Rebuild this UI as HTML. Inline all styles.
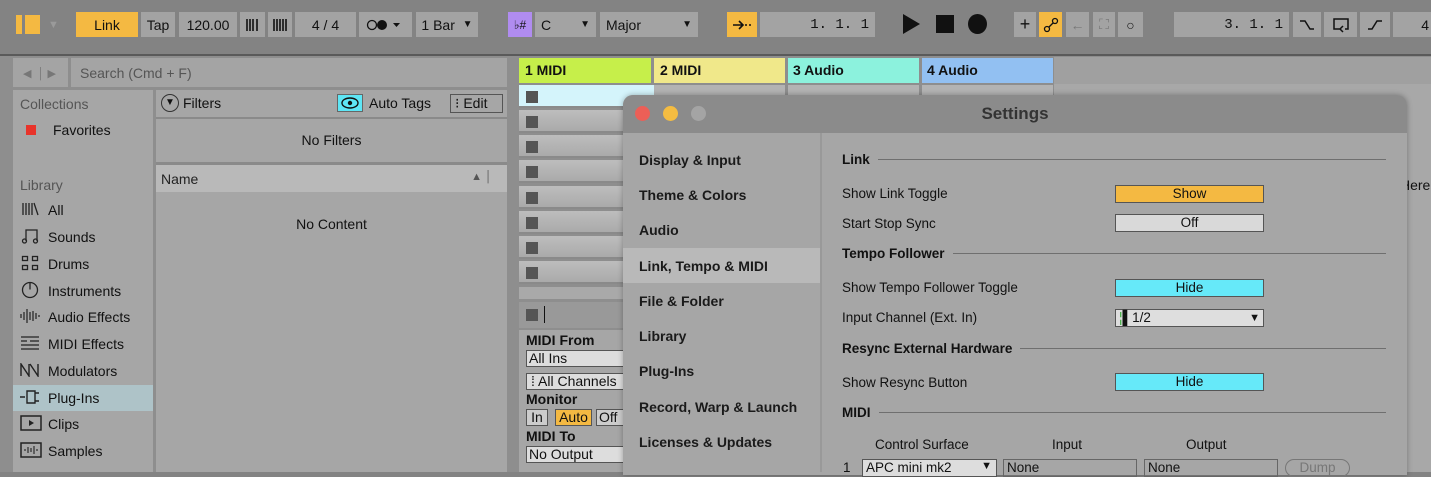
<!DOCTYPE html>
<html><head><style>
*{box-sizing:border-box;margin:0;padding:0}
body{width:1431px;height:472px;overflow:hidden;background:#838383;font-family:"Liberation Sans",sans-serif;font-size:13.5px;color:#111;position:relative}
.a{position:absolute}
.btn{position:absolute;top:12px;height:25px;background:#a3a3a3;display:flex;align-items:center;justify-content:center;font-size:14px;color:#111}
.side div.i{position:absolute;left:0;width:140px;height:26px;display:flex;align-items:center;padding-left:20px;font-size:14px}
.ic{width:20px;display:inline-block;margin-right:8px;text-align:center;font-size:13px}
.slot{position:absolute;left:519px;width:135px;height:23px;background:linear-gradient(#bdbdbd,#aaa);border-bottom:2px solid #8a8a8a}
.slot:before{content:"";position:absolute;left:7px;top:6px;width:12px;height:12px;background:#555}
.nav div{position:absolute;left:623px;width:197px;height:35px;padding-left:16px;display:flex;align-items:center;font-weight:bold;font-size:14px;color:#1a1a1a}
.sec{position:absolute;left:842px;font-weight:bold;font-size:13.5px;display:flex;align-items:center;width:544px}
.sec:after{content:"";flex:1;height:1px;background:#6f6f6f;margin-left:8px}
.lb{position:absolute;left:842px;font-size:13.5px}
.tg{position:absolute;left:1115px;width:149px;height:18px;border:1px solid #555;text-align:center;font-size:13.5px;line-height:16px}
</style></head><body>
<!-- toolbar -->
<div class="a" style="left:16px;top:15px;width:6px;height:19px;background:#f4b942"></div>
<div class="a" style="left:25px;top:15px;width:15px;height:19px;background:#f4b942"></div>
<div class="a" style="left:48px;top:19px;color:#9a9a9a;font-size:11px">▼</div>
<div class="btn" style="left:76px;width:62px;background:#f4b942">Link</div>
<div class="btn" style="left:141px;width:34px">Tap</div>
<div class="btn" style="left:179px;width:58px">120.00</div>
<div class="btn" style="left:240px;width:25px"><svg width="14" height="14"><path d="M1 1v12M4 1v12M7 1v12M11 1v12" stroke="#111" stroke-width="1.6"/></svg></div>
<div class="btn" style="left:268px;width:24px"><svg width="14" height="14"><path d="M1 1v12M4 1v12M7 1v12M10 1v12M13 1v12" stroke="#111" stroke-width="1.6"/></svg></div>
<div class="btn" style="left:295px;width:61px">4 / 4</div>
<div class="btn" style="left:359px;width:53px"><svg width="40" height="14"><circle cx="6" cy="7" r="4.5" fill="none" stroke="#111" stroke-width="1.3"/><circle cx="16" cy="7" r="5" fill="#111"/><path d="M27 5h7l-3.5 4z" fill="#111"/></svg></div>
<div class="btn" style="left:416px;width:62px">1 Bar &nbsp;<span style="font-size:10px">▼</span></div>
<div class="btn" style="left:508px;width:24px;background:#b08cf0;font-size:12px">♭#</div>
<div class="btn" style="left:535px;width:61px;justify-content:space-between;padding:0 6px">C<span style="font-size:10px">▼</span></div>
<div class="btn" style="left:600px;width:98px;justify-content:space-between;padding:0 6px">Major<span style="font-size:10px">▼</span></div>
<div class="btn" style="left:727px;width:30px;background:#f4b942"><svg width="20" height="12"><path d="M1 6h9M7 2l4 4-4 4M13 6h2M17 6h2" stroke="#111" stroke-width="1.6" fill="none"/></svg></div>
<div class="btn" style="left:760px;width:115px;font-family:'Liberation Mono',monospace;justify-content:flex-end;padding-right:6px">1. 1. 1</div>
<div class="a" style="left:903px;top:14px;width:0;height:0;border-left:17px solid #111;border-top:10px solid transparent;border-bottom:10px solid transparent"></div>
<div class="a" style="left:936px;top:15px;width:18px;height:18px;background:#111"></div>
<div class="a" style="left:968px;top:14px;width:19px;height:20px;border-radius:50%;background:#111"></div>
<div class="btn" style="left:1014px;width:22px;font-size:18px">+</div>
<div class="btn" style="left:1039px;width:23px;background:#f4b942"><svg width="16" height="16"><circle cx="4" cy="12" r="2.5" fill="none" stroke="#111" stroke-width="1.3"/><circle cx="12" cy="4" r="2.5" fill="none" stroke="#111" stroke-width="1.3"/><path d="M6 10l4-4" stroke="#111" stroke-width="1.3"/></svg></div>
<div class="btn" style="left:1066px;width:23px;color:#777">←</div>
<div class="btn" style="left:1093px;width:22px;color:#777">⛶</div>
<div class="btn" style="left:1118px;width:25px">○</div>
<div class="btn" style="left:1174px;width:115px;font-family:'Liberation Mono',monospace;justify-content:flex-end;padding-right:6px">3. 1. 1</div>
<div class="btn" style="left:1293px;width:28px"><svg width="16" height="12"><path d="M1 2h5l5 8h4" stroke="#111" stroke-width="1.5" fill="none"/></svg></div>
<div class="btn" style="left:1324px;width:33px"><svg width="18" height="16"><path d="M8 12H2V2h14v10h-3M11 9l-3 3 3 3" stroke="#111" stroke-width="1.5" fill="none"/></svg></div>
<div class="btn" style="left:1360px;width:30px"><svg width="16" height="12"><path d="M1 10h4l5-8h5" stroke="#111" stroke-width="1.5" fill="none"/></svg></div>
<div class="btn" style="left:1393px;width:38px;justify-content:flex-end;padding-right:2px">4</div>
<div class="a" style="left:0;top:54px;width:1431px;height:2px;background:#5a5a5a"></div>
<div class="a" style="left:0;top:56px;width:1431px;height:416px;background:#8e8e8e"></div>
<!-- browser -->
<div class="a" style="left:13px;top:58px;width:55px;height:29px;background:#a4a4a4;color:#777;font-size:11px;padding:9px 0 0 10px">◀ &nbsp;│ ▶</div>
<div class="a" style="left:71px;top:58px;width:436px;height:29px;background:#a4a4a4;color:#555;padding:7px 0 0 9px;font-size:14px">Search (Cmd + F)</div>
<div class="a side" style="left:13px;top:90px;width:140px;height:382px;background:#a6a6a6">
<div class="a" style="left:7px;top:6px;color:#555;font-size:14px">Collections</div>
<div class="i" style="top:27px;padding-left:13px"><span style="width:10px;height:10px;background:#e8332a;display:inline-block;margin-right:17px"></span>Favorites</div>
<div class="a" style="left:7px;top:87px;color:#555;font-size:14px">Library</div>
<div class="i" style="top:107px;padding-left:7px"><span class="ic"><svg width="18" height="14"><path d="M2 1v12M5 1v12M8 1v12M11 1v12M13 1l4 12" stroke="#222" stroke-width="1.3"/></svg></span>All</div>
<div class="i" style="top:134px;padding-left:7px"><span class="ic"><svg width="18" height="16"><path d="M5 13V2h11v11" stroke="#222" stroke-width="1.3" fill="none"/><circle cx="3.5" cy="13" r="2" fill="none" stroke="#222" stroke-width="1.3"/><circle cx="14.5" cy="13" r="2" fill="none" stroke="#222" stroke-width="1.3"/></svg></span>Sounds</div>
<div class="i" style="top:161px;padding-left:7px"><span class="ic"><svg width="18" height="16"><rect x="1.5" y="1.5" width="5" height="4" fill="none" stroke="#222" stroke-width="1.3"/><rect x="11.5" y="1.5" width="5" height="4" fill="none" stroke="#222" stroke-width="1.3"/><rect x="1.5" y="10.5" width="5" height="4" fill="none" stroke="#222" stroke-width="1.3"/><rect x="11.5" y="10.5" width="5" height="4" fill="none" stroke="#222" stroke-width="1.3"/></svg></span>Drums</div>
<div class="i" style="top:188px;padding-left:7px"><span class="ic"><svg width="18" height="18"><circle cx="9" cy="9" r="7.5" fill="none" stroke="#222" stroke-width="1.3"/><path d="M9 1.5v7" stroke="#222" stroke-width="1.3"/></svg></span>Instruments</div>
<div class="i" style="top:214px;padding-left:7px"><span class="ic"><svg width="20" height="16"><path d="M1 6v4M4 4v8M7 1v14M10 4v8M13 3v10M16 5v6M19 7v2" stroke="#222" stroke-width="1.2"/></svg></span>Audio Effects</div>
<div class="i" style="top:241px;padding-left:7px"><span class="ic"><svg width="20" height="14"><path d="M1 1h18M1 5h6M10 5h9M1 9h18M1 13h18" stroke="#222" stroke-width="1.3"/></svg></span>MIDI Effects</div>
<div class="i" style="top:268px;padding-left:7px"><span class="ic"><svg width="20" height="14"><path d="M1 13V1l8 12V1M10 1l8 12V1" stroke="#222" stroke-width="1.4" fill="none"/></svg></span>Modulators</div>
<div class="i" style="top:295px;padding-left:7px;background:#aec3c8"><span class="ic"><svg width="22" height="16"><path d="M0 8h5M7 2h8v12H7zM15 4h4M15 12h4" stroke="#222" stroke-width="1.4" fill="none"/></svg></span>Plug-Ins</div>
<div class="i" style="top:321px;padding-left:7px"><span class="ic"><svg width="22" height="16"><rect x="1" y="1" width="20" height="14" fill="none" stroke="#222" stroke-width="1.5"/><path d="M9 5l5 3-5 3z" fill="#222"/></svg></span>Clips</div>
<div class="i" style="top:348px;padding-left:7px"><span class="ic"><svg width="22" height="16"><rect x="1" y="1" width="20" height="14" fill="none" stroke="#222" stroke-width="1.5"/><path d="M5 7v2M8 5v6M11 6v4M14 4v8M17 7v2" stroke="#222" stroke-width="1.1"/></svg></span>Samples</div>
</div>
<div class="a" style="left:156px;top:90px;width:351px;height:382px;background:#a6a6a6"></div>
<div class="a" style="left:161px;top:94px;width:18px;height:18px;border-radius:50%;border:1.5px solid #333;font-size:10px;text-align:center;line-height:16px">▼</div>
<div class="a" style="left:183px;top:95px;font-size:14px">Filters</div>
<div class="a" style="left:337px;top:94px;width:26px;height:18px;background:#5ee6f5;border:1px solid #666"><svg width="24" height="16"><ellipse cx="12" cy="8" rx="8" ry="5" fill="none" stroke="#111" stroke-width="1.4"/><circle cx="12" cy="8" r="2.2" fill="#111"/></svg></div>
<div class="a" style="left:369px;top:95px;font-size:14px">Auto Tags</div>
<div class="a" style="left:450px;top:94px;width:53px;height:19px;border:1px solid #555;font-size:14px;padding-left:4px;line-height:17px">⁝ Edit</div>
<div class="a" style="left:156px;top:117px;width:351px;height:2px;background:#8a8a8a"></div>
<div class="a" style="left:156px;top:132px;width:351px;text-align:center;font-size:14px">No Filters</div>
<div class="a" style="left:156px;top:162px;width:351px;height:3px;background:#8a8a8a"></div>
<div class="a" style="left:156px;top:165px;width:351px;height:27px;background:#b9b9b9;padding:6px 0 0 5px;font-size:14px;color:#222">Name<span style="position:absolute;right:15px;top:6px;font-size:11px;color:#555">▲ │</span></div>
<div class="a" style="left:156px;top:216px;width:351px;text-align:center;font-size:14px">No Content</div>
<div class="a" style="left:507px;top:56px;width:12px;height:416px;background:#8e8e8e"></div>
<!-- tracks -->
<div class="a" style="left:1054px;top:57px;width:377px;height:415px;background:#a0a0a0"></div>
<div class="a" style="left:1054px;top:84px;width:377px;height:388px;background:#a8a8a8"></div>
<div class="a" style="left:1400px;top:177px;font-size:14px">Here</div>
<div class="a" style="left:519px;top:58px;width:132px;height:25px;background:#c6ef4a;font-weight:bold;font-size:14px;padding:4px 6px">1 MIDI</div>
<div class="a" style="left:654px;top:58px;width:131px;height:25px;background:#f0e88a;font-weight:bold;font-size:14px;padding:4px 6px">2 MIDI</div>
<div class="a" style="left:788px;top:58px;width:131px;height:25px;background:#8cf2dd;font-weight:bold;font-size:14px;padding:4px 5px">3 Audio</div>
<div class="a" style="left:922px;top:58px;width:131px;height:25px;background:#92c0f2;font-weight:bold;font-size:14px;padding:4px 5px">4 Audio</div>
<div class="slot" style="top:85px;background:#d4f4fb"></div>
<div class="slot" style="top:110px"></div><div class="slot" style="top:135px"></div><div class="slot" style="top:160px"></div><div class="slot" style="top:186px"></div><div class="slot" style="top:211px"></div><div class="slot" style="top:236px"></div><div class="slot" style="top:261px"></div>
<div class="a" style="left:654px;top:85px;width:131px;height:10px;background:#b3b3b3"></div>
<div class="a" style="left:788px;top:85px;width:131px;height:10px;background:#b3b3b3"></div>
<div class="a" style="left:922px;top:85px;width:131px;height:10px;background:#b3b3b3"></div>
<div class="a" style="left:519px;top:287px;width:110px;height:12px;background:#a9a9a9"></div>
<div class="a" style="left:519px;top:302px;width:110px;height:26px;background:#999"><span style="position:absolute;left:7px;top:7px;width:12px;height:12px;background:#555"></span><span style="position:absolute;left:25px;top:4px;width:1px;height:17px;background:#111"></span></div>
<div class="a" style="left:519px;top:330px;width:110px;height:142px;background:#a6a6a6"></div>
<div class="a" style="left:526px;top:332px;font-weight:bold;font-size:14px">MIDI From</div>
<div class="a" style="left:526px;top:350px;width:100px;height:17px;border:1px solid #555;background:#ddd;padding-left:2px;font-size:14px;line-height:15px">All Ins</div>
<div class="a" style="left:526px;top:373px;width:100px;height:17px;border:1px solid #555;background:#ddd;padding-left:4px;font-size:14px;line-height:15px">⁞ All Channels</div>
<div class="a" style="left:526px;top:391px;font-weight:bold;font-size:14px">Monitor</div>
<div class="a" style="left:526px;top:409px;width:22px;height:17px;border:1px solid #555;background:#ccc;font-size:14px;text-align:center;line-height:15px">In</div>
<div class="a" style="left:555px;top:409px;width:37px;height:17px;border:1px solid #555;background:#f4b942;font-size:14px;text-align:center;line-height:15px">Auto</div>
<div class="a" style="left:596px;top:409px;width:30px;height:17px;border:1px solid #555;background:#ccc;font-size:14px;padding-left:2px;line-height:15px">Off</div>
<div class="a" style="left:526px;top:428px;font-weight:bold;font-size:14px">MIDI To</div>
<div class="a" style="left:526px;top:446px;width:100px;height:17px;border:1px solid #555;background:#ddd;padding-left:2px;font-size:14px;line-height:15px">No Output</div>
<!-- dialog -->
<div class="a" style="left:623px;top:95px;width:784px;height:380px;border-radius:10px 10px 0 0;background:#a6a6a6;overflow:hidden;box-shadow:0 0 6px rgba(0,0,0,.3)">
<div style="height:38px;background:#8b8b8b;text-align:center;font-weight:bold;font-size:17px;color:#333;line-height:38px">Settings</div>
</div>
<div class="a" style="left:635px;top:106px;width:15px;height:15px;border-radius:50%;background:#ec5f57"></div>
<div class="a" style="left:663px;top:106px;width:15px;height:15px;border-radius:50%;background:#f4bc41"></div>
<div class="a" style="left:691px;top:106px;width:15px;height:15px;border-radius:50%;background:#a4a4a4"></div>
<div class="a" style="left:820px;top:133px;width:2px;height:339px;background:#999"></div>
<div class="nav">
<div style="top:142px">Display &amp; Input</div>
<div style="top:177px">Theme &amp; Colors</div>
<div style="top:212px">Audio</div>
<div style="top:248px;background:#b9b9b9">Link, Tempo &amp; MIDI</div>
<div style="top:283px">File &amp; Folder</div>
<div style="top:318px">Library</div>
<div style="top:353px">Plug-Ins</div>
<div style="top:389px">Record, Warp &amp; Launch</div>
<div style="top:424px">Licenses &amp; Updates</div>
</div>
<div class="sec" style="top:152px">Link</div>
<div class="lb" style="top:186px">Show Link Toggle</div>
<div class="tg" style="top:185px;background:#f4b942">Show</div>
<div class="lb" style="top:216px">Start Stop Sync</div>
<div class="tg" style="top:214px;background:#d9d9d9">Off</div>
<div class="sec" style="top:246px">Tempo Follower</div>
<div class="lb" style="top:280px">Show Tempo Follower Toggle</div>
<div class="tg" style="top:279px;background:#66e9f9">Hide</div>
<div class="lb" style="top:310px">Input Channel (Ext. In)</div>
<div class="tg" style="top:309px;background:#dedede;text-align:left;padding-left:3px"><span style="color:#3a3">¦</span>▌1/2<span style="position:absolute;right:3px;font-size:11px">▼</span></div>
<div class="sec" style="top:341px">Resync External Hardware</div>
<div class="lb" style="top:375px">Show Resync Button</div>
<div class="tg" style="top:373px;background:#66e9f9">Hide</div>
<div class="sec" style="top:405px">MIDI</div>
<div class="lb" style="left:875px;top:437px">Control Surface</div>
<div class="lb" style="left:1052px;top:437px">Input</div>
<div class="lb" style="left:1186px;top:437px">Output</div>
<div class="lb" style="left:843px;top:460px">1</div>
<div class="a" style="left:862px;top:459px;width:135px;height:18px;border:1px solid #555;background:#ddd;padding-left:3px;font-size:13.5px">APC mini mk2<span style="position:absolute;right:4px;font-size:11px">▼</span></div>
<div class="a" style="left:1003px;top:459px;width:134px;height:18px;border:1px solid #666;padding-left:3px">None</div>
<div class="a" style="left:1144px;top:459px;width:134px;height:18px;border:1px solid #666;padding-left:3px">None</div>
<div class="a" style="left:1285px;top:459px;width:65px;height:18px;border:1px solid #777;border-radius:9px;color:#777;text-align:center">Dump</div>
</body></html>
